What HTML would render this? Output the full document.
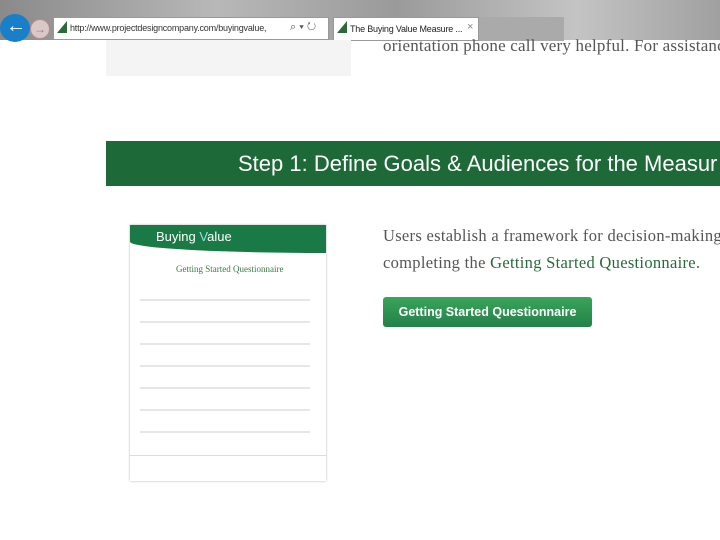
<!DOCTYPE html>
<html><head><style>
body{margin:0;width:720px;height:540px;overflow:hidden;background:#fff;position:relative;font-family:"Liberation Sans",sans-serif}
.a{position:absolute}
.serif{font-family:"Liberation Serif",serif;color:#555}
</style></head><body>
<div class="a" style="left:0;top:0;width:720px;height:40px;background:linear-gradient(90deg,#8a8a8a,#b8b8b8 30%,#9a9a9a 55%,#c4c4c4 80%,#a0a0a0)"></div>
<div class="a" style="left:0;top:14px;width:30px;height:28px;border-radius:50%;background:#1a7fc9"></div>
<div class="a" style="left:6px;top:15px;color:#fff;font-size:20px;font-weight:bold">←</div>
<div class="a" style="left:30px;top:19px;width:18px;height:18px;border-radius:50%;border:1px solid #b88;background:#d8c8c8;font-size:12px;text-align:center;line-height:18px;color:#a77">→</div>
<div class="a" style="left:53px;top:17px;width:276px;height:23px;background:#fff;border:1px solid #999;box-sizing:border-box"></div>
<div class="a" style="left:57px;top:21px;width:0;height:0;border-left:10px solid transparent;border-bottom:12px solid #2d6a3a"></div>
<div class="a" style="left:70px;top:23px;font-size:9px;color:#333;letter-spacing:-0.2px">http://www.projectdesigncompany.com/buyingvalue,</div>
<div class="a" style="left:290px;top:21px;font-size:11px;color:#555">⌕ ▾ ↻</div>
<div class="a" style="left:333px;top:17px;width:146px;height:24px;background:#fff;border:1px solid #999;box-sizing:border-box"></div>
<div class="a" style="left:337px;top:21px;width:0;height:0;border-left:10px solid transparent;border-bottom:12px solid #2d6a3a"></div>
<div class="a" style="left:350px;top:24px;font-size:9px;color:#222;letter-spacing:-0.2px">The Buying Value Measure ...</div>
<div class="a" style="left:467px;top:21px;font-size:11px;color:#888">×</div>
<div class="a" style="left:479px;top:17px;width:85px;height:24px;background:#aaa"></div>
<div class="a" style="left:106px;top:40px;width:245px;height:36px;background:#f4f4f4"></div>
<div class="a serif" style="left:383px;top:36px;font-size:17px;white-space:nowrap;letter-spacing:0.2px">orientation phone call very helpful. For assistanc</div>
<div class="a" style="left:106px;top:141px;width:614px;height:45px;background:#1d6a38"></div>
<div class="a" style="left:238px;top:151px;font-size:22px;color:#fff;white-space:nowrap">Step 1: Define Goals &amp; Audiences for the Measur</div>
<div class="a" style="left:130px;top:225px;width:196px;height:256px;background:#fff;box-shadow:0 0 2px #aaa"></div>
<div class="a" style="left:130px;top:225px;width:196px;height:28px;background:#1a7a45;border-bottom-left-radius:100% 40%"></div>
<div class="a" style="left:156px;top:229px;font-size:13px;color:#fff">Buying <span style="color:#9de">V</span>alue</div>
<div class="a" style="left:176px;top:264px;font-family:'Liberation Serif',serif;font-size:9px;color:#3a7a45">Getting Started Questionnaire</div>
<div class="a" style="left:140px;top:290px;width:170px;height:150px;background:repeating-linear-gradient(#fff 0 9px,#e6e6e6 9px 11px,#fff 11px 22px)"></div>
<div class="a" style="left:130px;top:455px;width:196px;height:1px;background:#ddd"></div>
<div class="a serif" style="left:383px;top:226px;font-size:16.5px;white-space:nowrap;letter-spacing:0.3px">Users establish a framework for decision-making</div>
<div class="a serif" style="left:383px;top:253px;font-size:16.5px;white-space:nowrap;letter-spacing:0.3px">completing the <span style="color:#2a6a3a">Getting Started Questionnaire</span>.</div>
<div class="a" style="left:383px;top:297px;width:209px;height:30px;border-radius:3px;background:linear-gradient(#3aa55a,#23804a);color:#fff;font-weight:bold;font-size:12.5px;line-height:30px;text-align:center">Getting Started Questionnaire</div>
</body></html>
